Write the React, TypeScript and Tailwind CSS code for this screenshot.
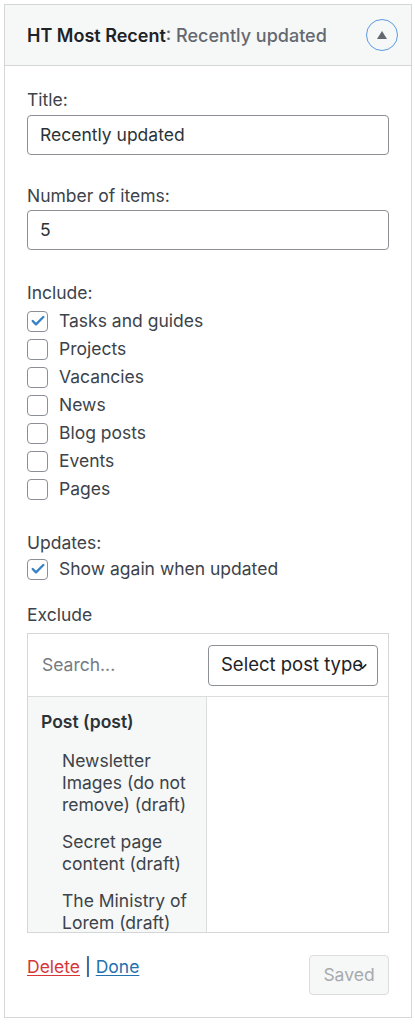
import { Check, ChevronDown } from 'lucide-react'

const includes = [
  { label: 'Tasks and guides', checked: true },
  { label: 'Projects', checked: false },
  { label: 'Vacancies', checked: false },
  { label: 'News', checked: false },
  { label: 'Blog posts', checked: false },
  { label: 'Events', checked: false },
  { label: 'Pages', checked: false },
]

const posts = ['Newsletter Images (do not remove) (draft)', 'Secret page content (draft)', 'The Ministry of Lorem (draft)']

function CheckRow({ label, checked }: { label: string; checked: boolean }) {
  return (
    <label className="flex items-center h-[28px] gap-[11px]">
      <span className="w-[21px] h-[21px] rounded-[4px] border border-[#8c8f94] bg-white flex items-center justify-center">
        {checked && <Check className="w-[16px] h-[16px] text-[#3582c4]" strokeWidth={3.5} />}
      </span>
      <span>{label}</span>
    </label>
  )
}

export default function App() {
  return (
    <div className="pt-[4px] pl-[4px] font-[Inter,sans-serif] text-[17.5px] text-[#3c434a] bg-white">
      <div className="w-[408px] border border-[#d5d6d8] bg-white">
        <header className="h-[61px] bg-[#f6f7f7] border-b border-[#d5d6d8] flex items-center pl-[22px] pr-[13px]">
          <h3 className="flex-1 text-[18px] font-semibold text-[#1d2327] truncate">
            HT Most Recent<span className="font-medium text-[#646970]">: Recently updated</span>
          </h3>
          <button className="w-[32px] h-[32px] rounded-full border-[1.5px] border-[#5b9be0] flex items-center justify-center">
            <svg width="10" height="8" viewBox="0 0 10 8">
              <path d="M5 0 L10 8 L0 8 Z" fill="#646970" />
            </svg>
          </button>
        </header>

        <div className="px-[22px] pt-[22px] pb-[22px]">
          <label className="block leading-[24px]">Title:</label>
          <div className="mt-[3px] h-[40px] rounded-[4px] border border-[#8c8f94] flex items-center px-[12px] text-[#2c3338]">
            Recently updated
          </div>

          <label className="block leading-[24px] mt-[29px]">Number of items:</label>
          <div className="mt-[2px] h-[40px] rounded-[4px] border border-[#8c8f94] flex items-center px-[12px] text-[#2c3338]">
            5
          </div>

          <p className="leading-[24px] mt-[31px]">Include:</p>
          <div className="mt-[2px] flex flex-col">
            {includes.map((i) => (
              <CheckRow key={i.label} label={i.label} checked={i.checked} />
            ))}
          </div>

          <p className="leading-[24px] mt-[28px]">Updates:</p>
          <CheckRow label="Show again when updated" checked />

          <p className="leading-[24px] mt-[20px]">Exclude</p>
          <div className="mt-[6px] h-[300px] border border-[#d5d6d8] flex flex-col overflow-hidden">
            <div className="h-[63px] border-b border-[#dcdcde] flex items-center pl-[14px] pr-[10px] shrink-0">
              <span className="flex-1 text-[#757b82]">Search...</span>
              <div className="relative w-[170px] h-[41px] rounded-[4px] border border-[#8c8f94] flex items-center pl-[12px] overflow-hidden whitespace-nowrap text-[18.5px] text-[#1d2327]">
                Select post type
                <ChevronDown className="absolute right-[8px] top-[14px] w-[13px] h-[13px] text-[#1d2327]" strokeWidth={3} />
              </div>
            </div>
            <div className="flex flex-1 min-h-0">
              <div className="w-[179px] bg-[#f6f7f7] border-r border-[#dcdcde] pt-[13px] pl-[13px] pr-[4px] overflow-hidden">
                <p className="font-semibold text-[#2c3338] leading-[24px]">Post (post)</p>
                <ul className="pl-[21px] mt-[16px] flex flex-col gap-[15px] leading-[22px]">
                  {posts.map((p) => (
                    <li key={p}>{p}</li>
                  ))}
                </ul>
              </div>
              <div className="flex-1" />
            </div>
          </div>

          <div className="mt-[22px] flex items-start justify-between">
            <div className="leading-[24px] text-[#1d2327]">
              <a className="text-[#d63638] underline underline-offset-2">Delete</a> |{' '}
              <a className="text-[#2271b1] underline underline-offset-2">Done</a>
            </div>
            <button className="w-[80px] h-[40px] rounded-[4px] border border-[#dcdcde] bg-[#f6f7f7] text-[#a7aaad]">
              Saved
            </button>
          </div>
        </div>
      </div>
    </div>
  )
}
